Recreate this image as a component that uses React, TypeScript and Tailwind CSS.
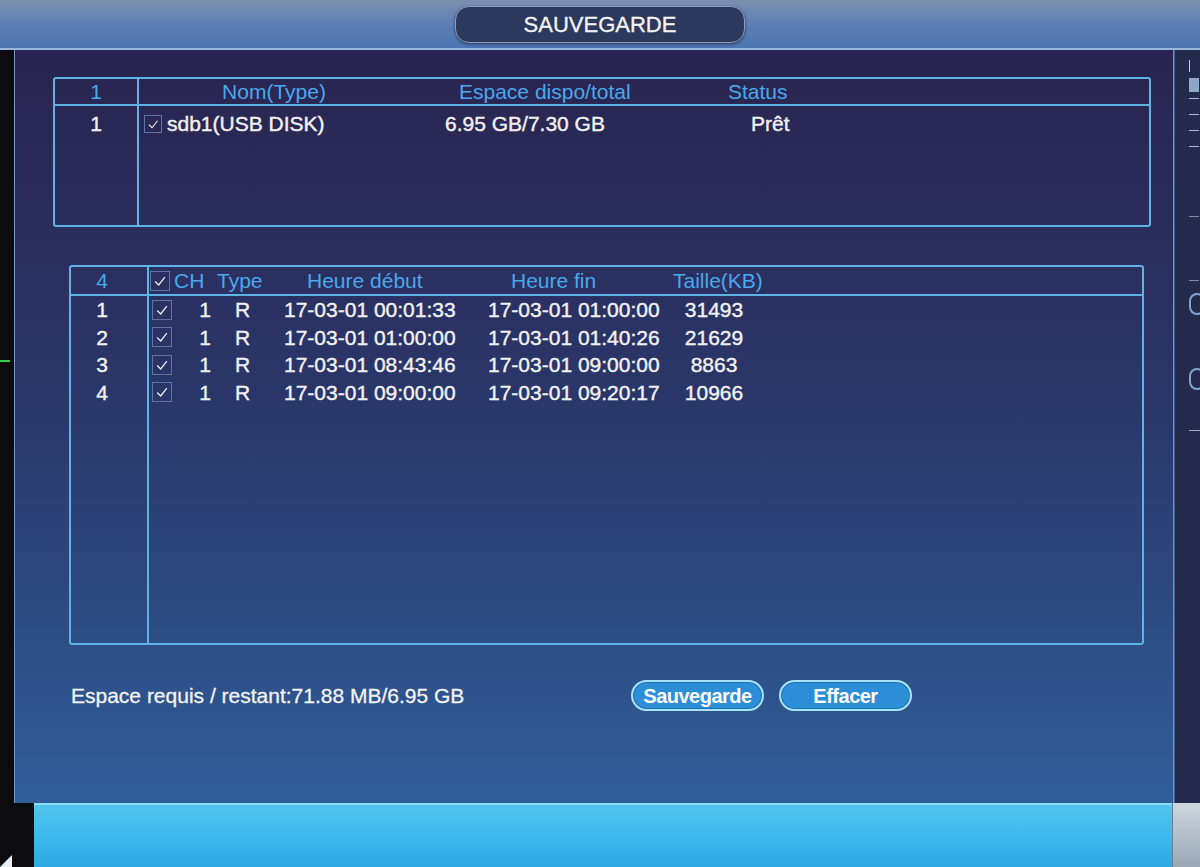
import React from 'react';

const files = [
  { ch: '1', type: 'R', start: '17-03-01 00:01:33', end: '17-03-01 01:00:00', size: '31493' },
  { ch: '1', type: 'R', start: '17-03-01 01:00:00', end: '17-03-01 01:40:26', size: '21629' },
  { ch: '1', type: 'R', start: '17-03-01 08:43:46', end: '17-03-01 09:00:00', size: '8863' },
  { ch: '1', type: 'R', start: '17-03-01 09:00:00', end: '17-03-01 09:20:17', size: '10966' },
];

const Check = ({ size = 20 }: { size?: number }) => (
  <span
    className="inline-flex items-center justify-center border border-[#5f74a4] shrink-0"
    style={{ width: size, height: size }}
  >
    <svg viewBox="0 0 16 16" className="w-[78%] h-[78%]" fill="none">
      <path d="M2.5 8.5 L6.5 12.5 L13.5 3.5" stroke="#f2f2f2" strokeWidth="1.4" />
    </svg>
  </span>
);

const DiskTable = () => (
  <div className="ml-[38px] w-[1098px] h-[150px] border-2 border-[#5bb3e6] rounded-[3px] flex flex-col">
    <div className="h-[27px] flex items-center border-b-2 border-[#5bb3e6] text-[#4aa8ec] text-[21px]">
      <span className="w-[84px] h-full flex items-center justify-center border-r-2 border-[#5bb3e6]">1</span>
      <span className="w-[270px] text-center">Nom(Type)</span>
      <span className="w-[280px] pl-[50px]">Espace dispo/total</span>
      <span className="pl-[39px]">Status</span>
    </div>
    <div className="flex-1 flex text-[#f1f1f1] text-[21px] [-webkit-text-stroke:0.4px_#f1f1f1]">
      <div className="w-[84px] h-full border-r-2 border-[#5bb3e6] text-center pt-[2px]">1</div>
      <div className="flex items-start pt-[2px]">
        <span className="w-[270px] flex items-center gap-[5px] pl-[5px]">
          <Check size={18} />
          sdb1(USB DISK)
        </span>
        <span className="w-[280px] pl-[36px]">6.95 GB/7.30 GB</span>
        <span className="pl-[62px]">Prêt</span>
      </div>
    </div>
  </div>
);

const FileTable = () => (
  <div className="ml-[54px] w-[1075px] h-[380px] border-2 border-[#5bb3e6] rounded-[3px] flex flex-col">
    <div className="h-[29px] flex items-center border-b-2 border-[#5bb3e6] text-[#4aa8ec] text-[21px]">
      <span className="w-[78px] h-full flex items-center justify-center pr-[14px] border-r-2 border-[#5bb3e6]">4</span>
      <span className="w-[22px] pl-[1px]">
        <Check />
      </span>
      <span className="w-[44px] pl-[3px]">CH</span>
      <span className="w-[90px] pl-[2px]">Type</span>
      <span className="w-[204px] pl-[2px]">Heure début</span>
      <span className="w-[162px] pl-[2px]">Heure fin</span>
      <span className="pl-[2px]">Taille(KB)</span>
    </div>
    <div className="flex-1 flex text-[#f1f1f1] text-[21px] [-webkit-text-stroke:0.4px_#f1f1f1]">
      <div className="w-[78px] h-full border-r-2 border-[#5bb3e6] pr-[14px]">
        {files.map((f, i) => (
          <div key={i} className="h-[27.5px] flex items-center justify-center">
            {i + 1}
          </div>
        ))}
      </div>
      <div className="flex-1">
        {files.map((f, i) => (
          <div key={i} className="h-[27.5px] flex items-center">
            <span className="w-[24px] pl-[3px]">
              <Check />
            </span>
            <span className="w-[42px] text-right pr-[4px]">{f.ch}</span>
            <span className="w-[68px] pl-[20px]">{f.type}</span>
            <span className="w-[190px] pl-[1px]">{f.start}</span>
            <span className="w-[210px] pl-[15px]">{f.end}</span>
            <span className="w-[62px] text-center">{f.size}</span>
          </div>
        ))}
      </div>
    </div>
  </div>
);

const PillButton = ({ label }: { label: string }) => (
  <button className="w-[133px] h-[31px] rounded-full bg-[#2d8ed8] border-2 border-[#a6e4f7] ring-1 ring-inset ring-[#1f6fb3] text-white text-[20px] font-bold tracking-[-0.5px] leading-none">
    {label}
  </button>
);

export default function App() {
  return (
    <div className="w-[1200px] h-[867px] flex flex-col overflow-hidden bg-black font-['Liberation_Sans',Arial,sans-serif]">
      {/* title band */}
      <div className="h-[50px] shrink-0 flex items-start justify-center pt-[6px] bg-gradient-to-b from-[#7d8fae] via-[#5d7fb4] to-[#4b74b0] border-b-2 border-[#9ab9df]">
        <div className="w-[290px] h-[37px] rounded-[14px] bg-[#2c385c] border border-[#8a9cc2] shadow-[0_1px_3px_rgba(0,0,0,0.5)] flex items-center justify-center text-[#f4f4f4] text-[22px] [-webkit-text-stroke:0.3px_#f4f4f4]">
          SAUVEGARDE
        </div>
      </div>

      <div className="flex-1 flex">
        <div className="w-[14px] bg-[#0c0c10] flex flex-col">
          <div className="h-[310px]" />
          <div className="h-[2px] w-[10px] bg-[#2fd24a]" />
        </div>

        {/* dialog body */}
        <div className="flex-1 flex flex-col border-l border-r border-[#6f98c4] bg-gradient-to-b from-[#29244f] via-[#2a386c] to-[#2f5e99] pt-[27px]">
          <DiskTable />
          <div className="h-[38px]" />
          <FileTable />
          <div className="flex items-center mt-[35px] h-[31px]">
            <span className="w-[616px] pl-[56px] text-[#f3f3f3] text-[21px] [-webkit-text-stroke:0.3px_#f3f3f3]">
              Espace requis / restant:71.88 MB/6.95 GB
            </span>
            <div className="flex gap-[15px]">
              <PillButton label="Sauvegarde" />
              <PillButton label="Effacer" />
            </div>
          </div>
        </div>

        {/* neighbouring window edge */}
        <div className="w-[26px] bg-[#242a4c] flex flex-col pt-[10px] pl-[14px] border-l border-[#3f5f92]">
          <div className="h-[12px] w-[10px] border-l border-[#c9d2e6]" />
          <div className="h-[14px] w-[10px] mt-[6px] bg-[#8ea7c8]" />
          <div className="h-[16px] w-[10px] mt-[6px] border-t border-[#a8b7d2]" />
          <div className="h-[16px] w-[10px] border-t border-[#a8b7d2]" />
          <div className="h-[16px] w-[10px] border-t border-[#a8b7d2]" />
          <div className="h-[70px] w-[10px] border-t border-[#a8b7d2]" />
          <div className="h-[64px] w-[10px] border-t border-[#6f8fc2]" />
          <div className="h-[80px] w-[10px] border-t border-[#6f8fc2] flex flex-col gap-[20px] pt-[12px]">
            <span className="w-[16px] h-[22px] rounded-full border-2 border-[#7fa3d2]" />
          </div>
          <div className="h-[70px] w-[10px] pt-[8px]">
            <span className="block w-[16px] h-[22px] rounded-full border-2 border-[#7fa3d2]" />
          </div>
          <div className="w-[12px] border-t border-[#8fb0dc]" />
        </div>
      </div>

      {/* bottom band */}
      <div className="h-[64px] shrink-0 flex">
        <div className="w-[34px] bg-[#0c0c10] flex items-end">
          <svg viewBox="0 0 12 14" className="w-[12px] h-[14px]">
            <path d="M0 14 L12 2 L12 14 Z" fill="#e8eef4" />
          </svg>
        </div>
        <div className="flex-1 border-t-2 border-[#8adcf6] bg-gradient-to-b from-[#52c4ee] via-[#3db9ec] to-[#2ea9e2]" />
        <div className="w-[28px] bg-gradient-to-b from-[#cfd6de] to-[#9aa8b6] border-l border-[#6b7f92]" />
      </div>
    </div>
  );
}
